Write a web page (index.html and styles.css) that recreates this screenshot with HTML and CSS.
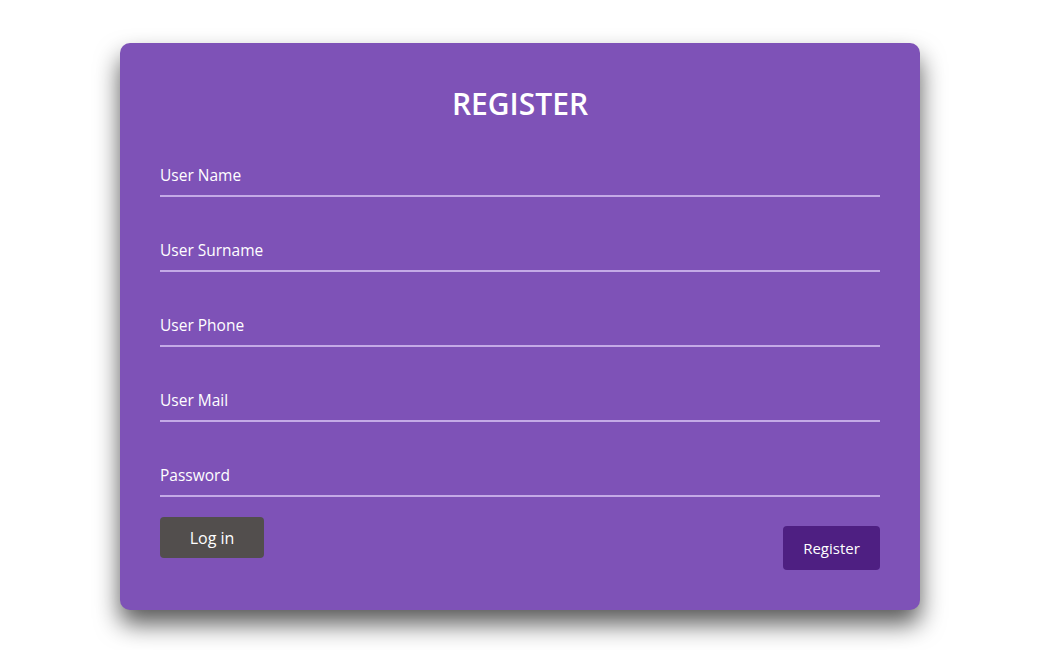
FILE: index.html
```html
<!DOCTYPE html>
<html lang="en">
<head>
    <meta charset="UTF-8">
    <meta name="viewport" content="width=device-width, initial-scale=1.0">
    <title>Register</title>
    <link rel="stylesheet" href="styles.css">
</head>
<body>
    <div class="card">
        <h1>REGISTER</h1>
        <form class="register-form">
            <div class="field"><input type="text" placeholder="User Name"></div>
            <div class="field"><input type="text" placeholder="User Surname"></div>
            <div class="field"><input type="text" placeholder="User Phone"></div>
            <div class="field"><input type="text" placeholder="User Mail"></div>
            <div class="field"><input type="password" placeholder="Password"></div>
            <div class="actions">
                <button type="button" class="btn-login">Log in</button>
                <button type="submit" class="btn-register">Register</button>
            </div>
        </form>
    </div>
</body>
</html>
```
FILE: styles.css
```css
/* Global Styles */
body {
    font-family: 'Open Sans', 'Noto Sans', sans-serif;
    background: #fff;
    margin: 0;
    padding: 43px 0 0 120px;
    min-height: 100vh;
    box-sizing: border-box;
    display: flex;
    align-items: flex-start;
    justify-content: flex-start;
}

/* Card */
.card {
    background: #7e52b7;
    width: 800px;
    box-sizing: border-box;
    padding: 36px 40px 40px;
    border-radius: 10px;
    box-shadow: 0 14px 24px rgba(0, 0, 0, 0.65);
    color: #fff;
}

.card h1 {
    text-align: center;
    font-size: 30px;
    font-weight: 600;
    margin: 0 0 18px;
    line-height: 50px;
}

/* Form */
.register-form {
    display: flex;
    flex-direction: column;
}

.field {
    height: 75px;
    display: flex;
    align-items: flex-end;
}

.field:first-child {
    height: 50px;
}

.field input {
    width: 100%;
    background: transparent;
    border: none;
    border-bottom: 2px solid #c4aae6;
    color: #fff;
    font-family: inherit;
    font-size: 15.5px;
    padding: 0 0 9px;
    outline: none;
}

.field input::placeholder {
    color: #fff;
}

/* Buttons */
.actions {
    display: flex;
    justify-content: space-between;
    align-items: flex-start;
    margin-top: 20px;
}

.actions button {
    font-family: inherit;
    color: #fff;
    border: none;
    border-radius: 4px;
    cursor: pointer;
}

.btn-login {
    background: #524e4d;
    width: 104px;
    height: 41px;
    font-size: 16px;
}

.btn-register {
    background: #4e1f82;
    width: 97px;
    height: 44px;
    font-size: 15px;
    margin-top: 9px;
}
```
